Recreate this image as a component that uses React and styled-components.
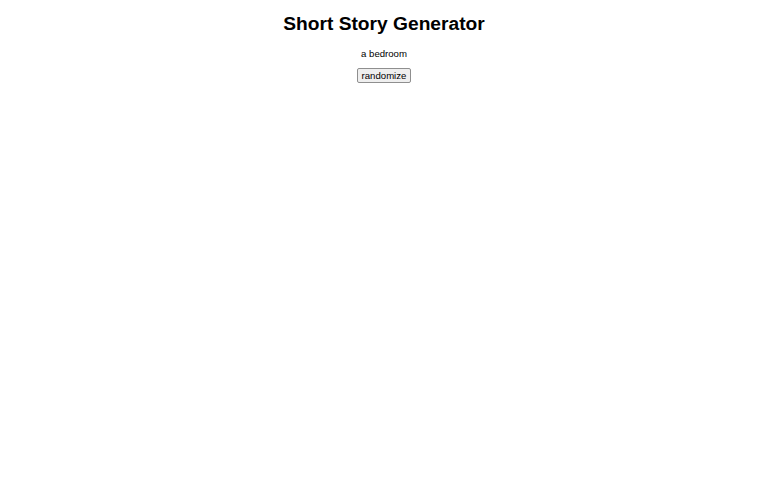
import React, { useState } from 'react';
import styled, { createGlobalStyle } from 'styled-components';

const settings = [
	'a bedroom',
	'a haunted lighthouse',
	'an abandoned train station',
	'a crowded market',
	'a spaceship',
];

const GlobalStyle = createGlobalStyle`
	html, body {
		margin: 0;
		padding: 0;
		background: #fff;
	}
	body {
		font-family: 'Liberation Sans', Arial, sans-serif;
		color: #000;
	}
`;

const Page = styled.div`
	display: flex;
	flex-direction: column;
	align-items: center;
	padding-top: 12.86px;
	text-align: center;
`;

const Title = styled.h1`
	margin: 0 0 12.86px;
	font-size: 19.2px;
	font-weight: 700;
	line-height: 22px;
`;

const Setting = styled.p`
	margin: 0 0 9.6px;
	font-size: 9.6px;
	line-height: 11px;
`;

const Button = styled.button`
	font-family: 'Liberation Sans', Arial, sans-serif;
	font-size: 9.6px;
	line-height: 11px;
	padding: 1px 3.6px;
	color: #000;
	background: #efefef;
	border: 1px solid #8f8f8f;
	border-radius: 2px;
	cursor: pointer;
`;

const App = () => {
	const [setting, setSetting] = useState(settings[0]);

	const randomize = () => {
		setSetting(settings[Math.floor(Math.random() * settings.length)]);
	};

	return (
		<>
			<GlobalStyle />
			<Page>
				<Title>Short Story Generator</Title>
				<Setting>{setting}</Setting>
				<Button onClick={randomize}>randomize</Button>
			</Page>
		</>
	);
};

export default App;
